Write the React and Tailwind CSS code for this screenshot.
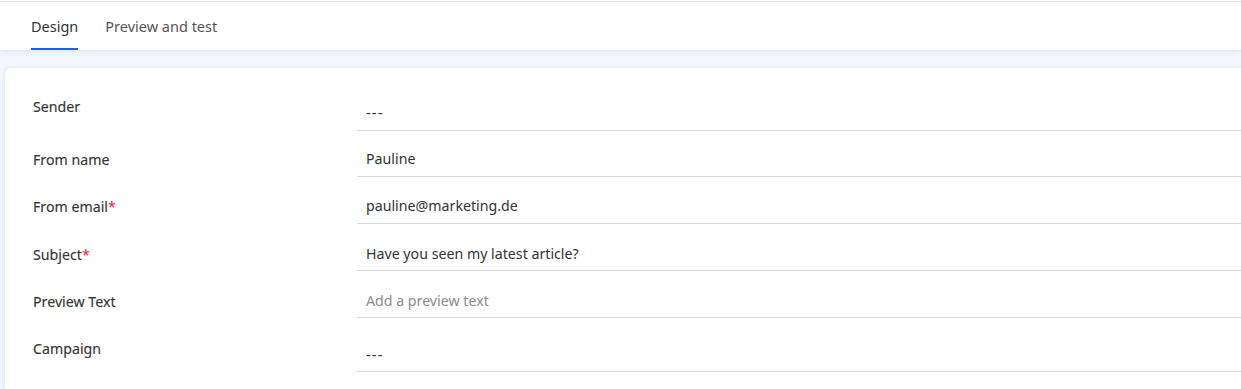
import React from "react";

const font = { fontFamily: '"Noto Sans", "Open Sans", sans-serif' };

function Row({ label, required, children, h, labelPb, valuePb }) {
  return (
    <div className="flex">
      <div className={`w-[324px] flex items-end text-[14.2px] leading-5 text-[#333] [-webkit-text-stroke:0.12px_#333] ${labelPb}`}>
        <span>{label}</span>
        {required && <span className="text-[#f5222d] [-webkit-text-stroke:0px]">*</span>}
      </div>
      <div className={`flex-1 flex items-end border-b border-[#d9d9d9] pl-[9px] text-[14.2px] leading-5 ${h} ${valuePb}`}>
        {children}
      </div>
    </div>
  );
}

function Dashes() {
  return <span className="text-[#333] text-[15px] tracking-[1px]">---</span>;
}

export default function App() {
  return (
    <div className="w-full bg-white" style={font}>
      <div className="mt-px border-t border-[#e8e8e8]" />
      <div className="relative z-10 flex h-[48px] bg-white pl-[31px] gap-[27px] pt-[2px] shadow-[0_2px_5px_rgba(0,0,0,0.07)]">
        <div className="relative flex items-center text-[14.5px] text-[#333]">
          Design
          <div className="absolute left-0 right-0 bottom-0 h-[2px] bg-[#1f5fe0]" />
        </div>
        <div className="flex items-center text-[14.5px] text-[#555]">Preview and test</div>
      </div>
      <div className="bg-[#f3f7fd] pt-[18px] pl-[5px]">
        <div className="bg-white rounded-tl-[6px] shadow-[0_0_4px_rgba(0,0,0,0.12)] pl-[28px] pb-[18px]">
          <Row label="Sender" h="h-[63px]" labelPb="pb-[14px]" valuePb="pb-[8px]">
            <Dashes />
          </Row>
          <Row label="From name" h="h-[46px]" labelPb="pb-[7px]" valuePb="pb-[7px]">
            <span className="text-[#333]">Pauline</span>
          </Row>
          <Row label="From email" required h="h-[47px]" labelPb="pb-[7px]" valuePb="pb-[7px]">
            <span className="text-[#333]">pauline@marketing.de</span>
          </Row>
          <Row label="Subject" required h="h-[47px]" labelPb="pb-[6px]" valuePb="pb-[6px]">
            <span className="text-[#333]">Have you seen my latest article?</span>
          </Row>
          <Row label="Preview Text" h="h-[47px]" labelPb="pb-[6px]" valuePb="pb-[6px]">
            <span className="text-[#8c8c8c]">Add a preview text</span>
          </Row>
          <Row label="Campaign" h="h-[54px]" labelPb="pb-[13px]" valuePb="pb-[7px]">
            <Dashes />
          </Row>
        </div>
      </div>
    </div>
  );
}
